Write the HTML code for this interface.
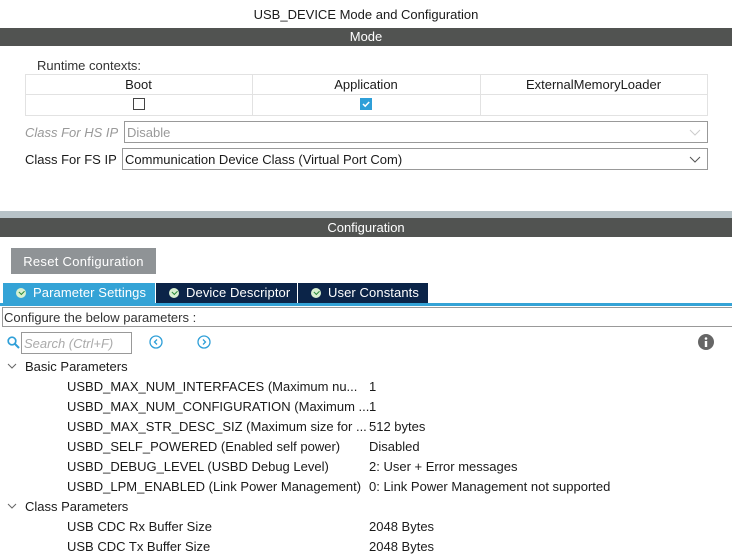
<!DOCTYPE html>
<html><head><meta charset="utf-8"><style>
*{margin:0;padding:0;box-sizing:border-box}
body{width:732px;height:559px;overflow:hidden;background:#fff;font-family:"Liberation Sans",Arial,sans-serif;font-size:13px;color:#1a1a1a;position:relative}
.a{position:absolute;white-space:nowrap}
.bar{position:absolute;left:0;width:732px;background:#515351;color:#fff;text-align:center}
.tab{position:absolute;top:283px;height:20px;color:#fff;font-size:13px;line-height:19px;padding-left:13px;letter-spacing:0.1px;overflow:hidden}
.tab i{display:inline-block;width:10px;height:10px;border-radius:50%;background:#d8f0d0;vertical-align:-1px;margin-right:7px;position:relative}
.tab i:after{content:"";position:absolute;left:2.5px;top:2px;width:4px;height:2.5px;border-left:1.5px solid #2a8a3a;border-bottom:1.5px solid #2a8a3a;transform:rotate(-45deg)}
.row{position:absolute;font-size:13px}
</style></head><body>
<div class="a" style="left:0;width:732px;text-align:center;top:7px;font-size:13px">USB_DEVICE Mode and Configuration</div>
<div class="bar" style="top:28px;height:18px;line-height:18px;font-size:13px">Mode</div>
<div class="a" style="left:37px;top:58px;font-size:13px;color:#333">Runtime contexts:</div>
<div class="a" style="left:25px;top:74px;width:683px;height:42px;border:1px solid #e2e2e2"></div>
<div class="a" style="left:25px;top:94px;width:683px;height:1px;background:#e2e2e2"></div>
<div class="a" style="left:252px;top:74px;width:1px;height:42px;background:#e2e2e2"></div>
<div class="a" style="left:480px;top:74px;width:1px;height:42px;background:#e2e2e2"></div>
<div class="a" style="left:25px;width:227px;text-align:center;top:77px;font-size:13px">Boot</div>
<div class="a" style="left:252px;width:228px;text-align:center;top:77px;font-size:13px">Application</div>
<div class="a" style="left:480px;width:227px;text-align:center;top:77px;font-size:13px">ExternalMemoryLoader</div>
<div class="a" style="left:133px;top:98px;width:12px;height:12px;border:1px solid #444"></div>
<div class="a" style="left:360px;top:98px;width:12px;height:12px;background:#2f9fd8"><svg width="12" height="12"><path d="M3 6l2.2 2.2L9.2 4" stroke="#fff" stroke-width="1.5" fill="none"/></svg></div>
<div class="a" style="left:25px;top:125px;font-size:13px;font-style:italic;color:#999">Class For HS IP</div>
<div class="a" style="left:124px;top:121px;width:584px;height:22px;border:1px solid #999;color:#999;padding:3px 2px;font-size:13px">Disable<svg style="position:absolute;right:6px;top:7px" width="12" height="7"><path d="M1 1l5 5 5-5" stroke="#ccc" fill="none"/></svg></div>
<div class="a" style="left:25px;top:152px;font-size:13px">Class For FS IP</div>
<div class="a" style="left:122px;top:148px;width:586px;height:22px;border:1px solid #999;padding:3px 2px;font-size:13px">Communication Device Class (Virtual Port Com)<svg style="position:absolute;right:6px;top:7px" width="12" height="7"><path d="M1 1l5 5 5-5" stroke="#555" fill="none"/></svg></div>
<div class="a" style="left:0;top:211px;width:732px;height:7px;background:#b8c3c8"></div>
<div class="bar" style="top:218px;height:19px;line-height:20px;font-size:13px">Configuration</div>
<div class="a" style="left:11px;top:248px;width:145px;height:26px;background:#8f9396;color:#fff;text-align:center;line-height:27px;font-size:13px;letter-spacing:0.3px">Reset Configuration</div>
<div class="tab" style="left:3px;width:152px;background:#34a3d6"><i></i>Parameter Settings</div>
<div class="tab" style="left:156px;width:141px;background:#0b2448"><i></i>Device Descriptor</div>
<div class="tab" style="left:298px;width:130px;background:#0b2448"><i></i>User Constants</div>
<div class="a" style="left:0;top:303px;width:732px;height:3px;background:#34a3d6"></div>
<div class="a" style="left:2px;top:307px;width:732px;height:20px;border:1px solid #999;border-right:none;padding:2px 1px;font-size:13px;color:#333">Configure the below parameters :</div>
<svg class="a" style="left:7px;top:336px" width="13" height="13"><circle cx="5" cy="5" r="3.8" stroke="#2f9fd8" stroke-width="1.7" fill="none"/><path d="M8 8l4 4" stroke="#2f9fd8" stroke-width="2"/></svg>
<div class="a" style="left:21px;top:332px;width:111px;height:22px;border:1px solid #999;color:#aaa;font-style:italic;padding:3px 2px;font-size:13px">Search (Ctrl+F)</div>
<svg class="a" style="left:149px;top:335px" width="14" height="14"><circle cx="7" cy="7" r="6" stroke="#2f9fd8" stroke-width="1.3" fill="none"/><path d="M8 4.5L5.5 7 8 9.5" stroke="#2f9fd8" stroke-width="1.3" fill="none"/></svg>
<svg class="a" style="left:197px;top:335px" width="14" height="14"><circle cx="7" cy="7" r="6" stroke="#2f9fd8" stroke-width="1.3" fill="none"/><path d="M6 4.5L8.5 7 6 9.5" stroke="#2f9fd8" stroke-width="1.3" fill="none"/></svg>
<svg class="a" style="left:698px;top:334px" width="16" height="16"><circle cx="8" cy="8" r="8" fill="#666"/><rect x="6.8" y="7" width="2.4" height="6" fill="#fff"/><circle cx="8" cy="4.5" r="1.3" fill="#fff"/></svg>
<svg class="a" style="left:7px;top:363px" width="10" height="7"><path d="M1 1l4 4 4-4" stroke="#666" fill="none"/></svg>
<div class="row" style="left:25px;top:359px">Basic Parameters</div>
<div class="row" style="left:67px;top:379px">USBD_MAX_NUM_INTERFACES (Maximum nu...</div><div class="row" style="left:369px;top:379px">1</div>
<div class="row" style="left:67px;top:399px">USBD_MAX_NUM_CONFIGURATION (Maximum ...</div><div class="row" style="left:369px;top:399px;background:#fff;padding-left:0">1</div>
<div class="row" style="left:67px;top:419px">USBD_MAX_STR_DESC_SIZ (Maximum size for ...</div><div class="row" style="left:369px;top:419px">512 bytes</div>
<div class="row" style="left:67px;top:439px">USBD_SELF_POWERED (Enabled self power)</div><div class="row" style="left:369px;top:439px">Disabled</div>
<div class="row" style="left:67px;top:459px">USBD_DEBUG_LEVEL (USBD Debug Level)</div><div class="row" style="left:369px;top:459px">2: User + Error messages</div>
<div class="row" style="left:67px;top:479px">USBD_LPM_ENABLED (Link Power Management)</div><div class="row" style="left:369px;top:479px">0: Link Power Management not supported</div>
<svg class="a" style="left:7px;top:503px" width="10" height="7"><path d="M1 1l4 4 4-4" stroke="#666" fill="none"/></svg>
<div class="row" style="left:25px;top:499px">Class Parameters</div>
<div class="row" style="left:67px;top:519px">USB CDC Rx Buffer Size</div><div class="row" style="left:369px;top:519px">2048 Bytes</div>
<div class="row" style="left:67px;top:539px">USB CDC Tx Buffer Size</div><div class="row" style="left:369px;top:539px">2048 Bytes</div>
</body></html>
